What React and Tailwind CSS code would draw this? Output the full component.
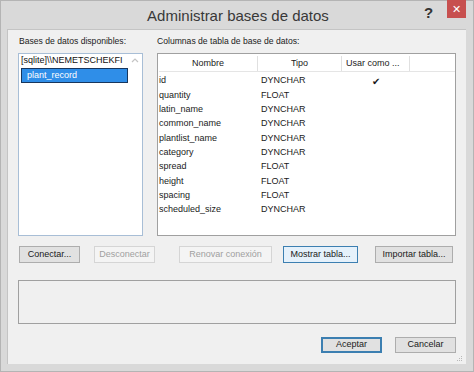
import React from 'react';

const rows = [
  ['id', 'DYNCHAR', true],
  ['quantity', 'FLOAT'],
  ['latin_name', 'DYNCHAR'],
  ['common_name', 'DYNCHAR'],
  ['plantlist_name', 'DYNCHAR'],
  ['category', 'DYNCHAR'],
  ['spread', 'FLOAT'],
  ['height', 'FLOAT'],
  ['spacing', 'FLOAT'],
  ['scheduled_size', 'DYNCHAR'],
];

const font = { fontFamily: '"Liberation Sans", Arial, sans-serif' };

const Btn = ({ children, className = '', disabled, focus }) => (
  <div
    className={`h-[17px] flex items-center justify-center text-[9px] border ${
      focus ? 'border-[#3c7fb1] bg-[#e5f1fb]' : disabled ? 'border-[#d5d5d5] bg-[#f4f4f4]' : 'border-[#adadad] bg-[#e1e1e1]'
    } ${disabled ? 'text-[#a0a0a0]' : 'text-[#1a1a1a]'} ${className}`}
  >
    {children}
  </div>
);

export default function App() {
  return (
    <div className="w-[474px] h-[372px] bg-[#d9d9d9] border border-[#b4b4b4] flex flex-col" style={font}>
      {/* title bar */}
      <div className="h-[28px] flex items-start relative">
        <div className="flex-1 text-center text-[15px] text-[#383838] pt-[4px] pl-[2px]">Administrar bases de datos</div>
        <div className="absolute left-[423px] top-[1px] text-[15px] font-bold text-[#333]">?</div>
        <div className="absolute left-[446px] top-[-1px] w-[19px] h-[18px] bg-[#c7504f] flex items-center justify-center text-white text-[11px]">✕</div>
      </div>

      {/* client area */}
      <div className="ml-[6px] w-[459px] h-[335px] bg-[#f0f0f0] border-l border-t border-[#c4c4c4] flex flex-col relative">
        <div className="flex pl-[10px] pt-[5px]">
          <div className="w-[125px] flex flex-col">
            <div className="text-[8.6px] text-[#222] h-[12px] leading-[12px] ml-[1px] whitespace-nowrap">Bases de datos disponibles:</div>
            <div className="mt-[6px] h-[183px] bg-white border border-[#a8bed6] relative">
              <div className="h-[14px] flex items-center text-[9px] text-[#111] pl-[2px] overflow-hidden whitespace-nowrap w-[108px]">[sqlite]\\NEMETSCHEKFI</div>
              <div className="absolute right-[3px] top-[3px]">
                <svg width="8" height="6" viewBox="0 0 8 6"><path d="M1 5 L4 2 L7 5" fill="none" stroke="#c4c4c4" strokeWidth="1.2" /></svg>
              </div>
              <div className="ml-[2px] w-[107px] h-[15px] bg-[#2f8ee8] border border-[#17365d] flex items-center text-[9px] text-white pl-[5px]">plant_record</div>
            </div>
          </div>
          <div className="w-[299px] ml-[14px] flex flex-col">
            <div className="text-[8.6px] text-[#222] h-[12px] leading-[12px] whitespace-nowrap">Columnas de tabla de base de datos:</div>
            <div className="mt-[6px] h-[183px] bg-white border border-[#a0a0a0] pl-[1px] pt-[2px]">
              <div className="flex h-[16px] text-[9px] text-[#222] border-b border-[#e5e5e5] items-center">
                <div className="w-[99px] text-center border-r border-[#e0e0e0] h-full flex items-center justify-center">Nombre</div>
                <div className="w-[84px] text-center border-r border-[#e0e0e0] h-full flex items-center justify-center">Tipo</div>
                <div className="w-[68px] pl-[4px] border-r border-[#e0e0e0] h-full flex items-center">Usar como ...</div>
              </div>
              <div className="pt-[2px]">
                {rows.map(([n, t, u]) => (
                  <div key={n} className="flex h-[14.33px] items-center text-[9px] text-[#1a1a1a]">
                    <div className="w-[102px]">{n}</div>
                    <div className="w-[81px]">{t}</div>
                    <div className="w-[68px] text-center text-[10px]">{u ? '✔' : ''}</div>
                  </div>
                ))}
              </div>
            </div>
          </div>
        </div>

        {/* buttons row */}
        <div className="flex mt-[10px] pl-[11px]">
          <Btn className="w-[61px]">Conectar...</Btn>
          <Btn className="w-[61px] ml-[14px]" disabled>Desconectar</Btn>
          <Btn className="w-[93px] ml-[24px]" disabled>Renovar conexión</Btn>
          <Btn className="w-[75px] ml-[11px]" focus>Mostrar tabla...</Btn>
          <Btn className="w-[78px] ml-[17px]">Importar tabla...</Btn>
        </div>

        {/* message box */}
        <div className="mt-[17px] ml-[10px] w-[438px] h-[44px] border border-[#a0a0a0] bg-[#f0f0f0]" />

        {/* ok / cancel */}
        <div className="flex justify-end mt-[13px] pr-[10px] gap-[13px]">
          <div className="w-[61px] h-[16px] border border-[#3c7fb1] bg-[#e1e1e1] flex items-center justify-center text-[9px] text-[#1a1a1a] shadow-[inset_0_0_0_1px_#3c7fb1]">Aceptar</div>
          <div className="w-[61px] h-[16px] border border-[#adadad] bg-[#e1e1e1] flex items-center justify-center text-[9px] text-[#1a1a1a]">Cancelar</div>
        </div>

        {/* resize grip */}
        <div className="absolute right-[3px] bottom-[2px]">
          <svg width="6" height="6" viewBox="0 0 6 6" fill="#b8b8b8">
            <rect x="4" y="0" width="1" height="1" />
            <rect x="2" y="2" width="1" height="1" />
            <rect x="4" y="2" width="1" height="1" />
            <rect x="0" y="4" width="1" height="1" />
            <rect x="2" y="4" width="1" height="1" />
            <rect x="4" y="4" width="1" height="1" />
          </svg>
        </div>
      </div>
    </div>
  );
}
